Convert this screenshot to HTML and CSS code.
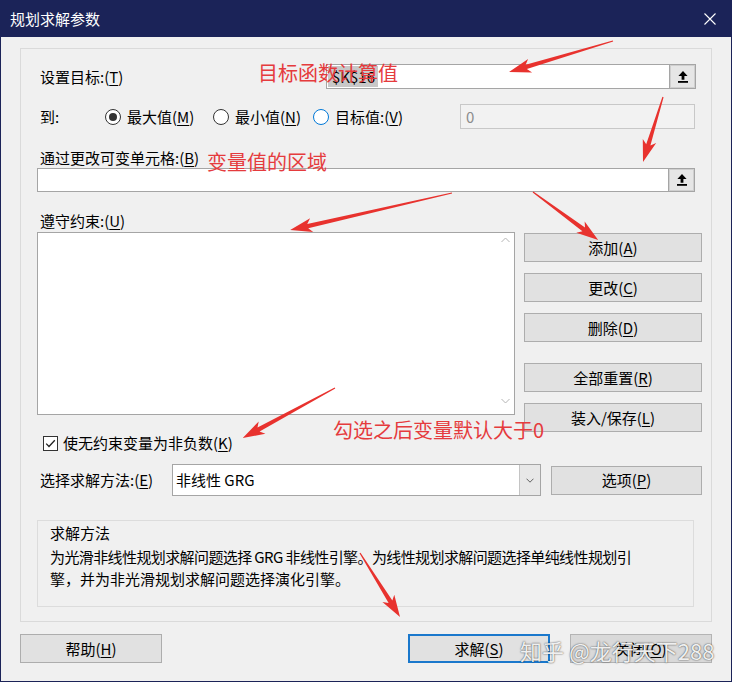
FILE: index.html
```html
<!DOCTYPE html>
<html lang="zh-CN">
<head>
<meta charset="utf-8">
<title>规划求解参数</title>
<link rel="stylesheet" href="styles.css">
</head>
<body>
<div class="window">
  <div class="titlebar">
    <span class="title">规划求解参数</span>
    <svg class="close" width="12" height="12" viewBox="0 0 12 12"><path d="M0.5 0.5L11.5 11.5M11.5 0.5L0.5 11.5" stroke="#ffffff" stroke-width="1.1" fill="none"/></svg>
  </div>
  <div class="body">
    <div class="panel">
      <div class="row">
        <span class="label">设置目标:(<u>T</u>)</span>
        <div class="refbox ref-target">
          <div class="field"><span class="sel">$K$16</span></div>
          <div class="collapse">
            <svg width="10" height="12" viewBox="0 0 10 12"><polygon points="5,0 9.6,5 6.4,5 6.4,8.8 3.6,8.8 3.6,5 0.4,5" fill="#000"/><rect x="0" y="10" width="10" height="1.8" fill="#000"/></svg>
          </div>
        </div>
      </div>
      <div class="row row-to">
        <span class="label to-label">到:</span>
        <span class="radio radio-max"><span class="circle on"></span><span>最大值(<u>M</u>)</span></span>
        <span class="radio radio-min"><span class="circle"></span><span>最小值(<u>N</u>)</span></span>
        <span class="radio"><span class="circle focus"></span><span>目标值:(<u>V</u>)</span></span>
        <div class="valuebox">0</div>
      </div>
      <div class="label label-vars">通过更改可变单元格:(<u>B</u>)</div>
      <div class="refbox ref-vars">
        <div class="field"></div>
        <div class="collapse">
          <svg width="10" height="12" viewBox="0 0 10 12"><polygon points="5,0 9.6,5 6.4,5 6.4,8.8 3.6,8.8 3.6,5 0.4,5" fill="#000"/><rect x="0" y="10" width="10" height="1.8" fill="#000"/></svg>
        </div>
      </div>
      <div class="label label-cons">遵守约束:(<u>U</u>)</div>
      <div class="cons">
        <div class="listbox">
          <div class="scroll">
            <svg width="9" height="6" viewBox="0 0 9 6"><path d="M0.5 5L4.5 1L8.5 5" stroke="#b4b4b4" stroke-width="1" fill="none"/></svg>
            <svg width="9" height="6" viewBox="0 0 9 6"><path d="M0.5 1L4.5 5L8.5 1" stroke="#b4b4b4" stroke-width="1" fill="none"/></svg>
          </div>
        </div>
        <div class="btncol">
          <div class="btn">添加(<u>A</u>)</div>
          <div class="btn">更改(<u>C</u>)</div>
          <div class="btn">删除(<u>D</u>)</div>
          <div class="btn btn-reset">全部重置(<u>R</u>)</div>
          <div class="btn">装入/保存(<u>L</u>)</div>
        </div>
      </div>
      <div class="check-row">
        <span class="checkbox"><svg width="13" height="13" viewBox="0 0 13 13"><path d="M2.2 6.6L5 9.5L10.8 3.2" stroke="#222" stroke-width="1.3" fill="none"/></svg></span>
        <span>使无约束变量为非负数(<u>K</u>)</span>
      </div>
      <div class="method-row">
        <span class="label method-label">选择求解方法:(<u>E</u>)</span>
        <div class="select">
          <span class="select-text">非线性 GRG</span>
          <span class="select-btn"><svg width="8" height="5" viewBox="0 0 8 5"><path d="M0.5 0.7L4 4.2L7.5 0.7" stroke="#606060" stroke-width="1" fill="none"/></svg></span>
        </div>
        <div class="btn btn-opt">选项(<u>P</u>)</div>
      </div>
      <div class="group">
        <div class="group-title">求解方法</div>
        <div class="group-text"><span class="tight">为光滑非线性规划求解问题选择 GRG 非线性引擎。为线性规划求解问题选择单纯线性规划引</span><br>擎，并为非光滑规划求解问题选择演化引擎。</div>
      </div>
    </div>
    <div class="footer">
      <div class="btn btn-foot">帮助(<u>H</u>)</div>
      <div class="btn btn-foot btn-solve">求解(<u>S</u>)</div>
      <div class="btn btn-foot btn-close">关闭(<u>O</u>)</div>
    </div>
  </div>
</div>
<div class="overlay">
  <svg class="arrows" width="732" height="682" viewBox="0 0 732 682">
    <g fill="#e8322e">
      <polygon transform="translate(613,41) rotate(163.4)" points="0,-0.6 90.5,-2.2 86.5,-7 108.5,0 86.5,7 90.5,2.2 0,0.6"/>
      <polygon transform="translate(663,97) rotate(107.1)" points="0,-0.6 50,-2.2 46,-7 68,0 46,7 50,2.2 0,0.6"/>
      <polygon transform="translate(452,193) rotate(167.1)" points="0,-0.6 148,-2.2 144,-7 166,0 144,7 148,2.2 0,0.6"/>
      <polygon transform="translate(533,192) rotate(36.4)" points="0,-0.6 63,-2.2 59,-7 81,0 59,7 63,2.2 0,0.6"/>
      <polygon transform="translate(335,388) rotate(151.5)" points="0,-0.6 87,-2.2 83,-7 105,0 83,7 87,2.2 0,0.6"/>
      <polygon transform="translate(360,553) rotate(58)" points="0,-0.6 57.5,-2.2 53.5,-7 75.5,0 53.5,7 57.5,2.2 0,0.6"/>
    </g>
  </svg>
  <span class="note note-target">目标函数计算值</span>
  <span class="note note-vars">变量值的区域</span>
  <span class="note note-check">勾选之后变量默认大于0</span>
  <span class="watermark">知乎 @龙行天下288</span>
</div>
</body>
</html>
```

FILE: styles.css
```css
* { box-sizing: border-box; }
html, body { margin: 0; padding: 0; }
body {
  position: relative;
  width: 732px;
  height: 682px;
  overflow: hidden;
  background: #f0f0f0;
  font-family: "Noto Sans CJK SC", "Microsoft YaHei", sans-serif;
  font-size: 15px;
  color: #000;
}
u { text-underline-offset: 2px; text-decoration-thickness: 1px; }

.window {
  width: 732px;
  height: 682px;
  display: flex;
  flex-direction: column;
  background: #f0f0f0;
  border: 1px solid #1b2358;
  border-top: none;
}
.titlebar {
  height: 37px;
  margin: 0 -1px;
  background: #1b2358;
  display: flex;
  align-items: center;
  justify-content: space-between;
  padding: 0 16px 0 10px;
}
.title { color: #fff; font-size: 15px; line-height: 20px; }
.close { display: block; }

.body { display: flex; flex-direction: column; }
.panel {
  margin: 11px 0 0 19px;
  width: 692px;
  border: 1px solid #dadada;
  padding: 15px 8px 14px 16px;
  display: flex;
  flex-direction: column;
}
.row { display: flex; align-items: center; height: 25px; }
.row-to { margin-top: 15px; }
.label { padding-left: 3px; line-height: 20px; white-space: nowrap; }

.refbox { display: flex; height: 25px; }
.ref-target { margin-left: auto; width: 370px; margin-right: 7px; }
.ref-vars { width: 658px; height: 24px; }
.field {
  flex: 1;
  background: #fff;
  border: 1px solid #a5a5a5;
  border-right: none;
  display: flex;
  align-items: center;
}
.sel {
  background: #c8c8c8;
  height: 21px;
  line-height: 21px;
  padding: 0 3px 0 4px;
  margin-left: 1px;
}
.collapse {
  width: 27px;
  background: #e6e6e6;
  border: 1px solid #a5a5a5;
  box-shadow: inset 0 0 0 1px #cfcfcf;
  display: flex;
  align-items: center;
  justify-content: center;
}
.collapse svg { display: block; }

.to-label { width: 68px; }
.radio { display: flex; align-items: center; gap: 6px; white-space: nowrap; line-height: 20px; }
.radio-max { width: 108px; }
.radio-min { width: 100px; }
.circle {
  width: 16px;
  height: 16px;
  border: 1px solid #333;
  border-radius: 50%;
  background: #fff;
  display: flex;
  align-items: center;
  justify-content: center;
  flex: none;
}
.circle.on::after {
  content: "";
  width: 8px;
  height: 8px;
  border-radius: 50%;
  background: #333;
}
.circle.focus { border-color: #0078d7; }
.valuebox {
  margin-left: auto;
  margin-right: 8px;
  width: 235px;
  height: 25px;
  border: 1px solid #c8c8c8;
  background: #f2f2f2;
  color: #8c8c8c;
  padding-left: 5px;
  line-height: 23px;
}

.label-vars { margin-top: 19px; height: 20px; }
.label-cons { margin-top: 19px; height: 20px; }

.cons { display: flex; gap: 9px; margin-top: 1px; }
.listbox {
  width: 478px;
  height: 183px;
  background: #fff;
  border: 1px solid #a5a5a5;
  display: flex;
  justify-content: flex-end;
}
.scroll {
  width: 17px;
  display: flex;
  flex-direction: column;
  justify-content: space-between;
  align-items: center;
  padding: 4px 0 10px;
}
.scroll svg { display: block; }
.btncol { width: 178px; display: flex; flex-direction: column; padding-top: 1px; }
.btn {
  height: 29px;
  background: #e1e1e1;
  border: 1px solid #adadad;
  display: flex;
  align-items: center;
  justify-content: center;
  white-space: nowrap;
  line-height: 20px;
  margin-top: 11px;
}
.btncol .btn:first-child { margin-top: 0; }
.btncol .btn-reset { margin-top: 21px; }

.check-row {
  margin-top: 1px;
  height: 20px;
  display: flex;
  align-items: center;
  gap: 5px;
  padding-left: 6px;
  line-height: 20px;
}
.checkbox {
  width: 15px;
  height: 15px;
  border: 1px solid #333;
  background: #fff;
  display: flex;
  align-items: center;
  justify-content: center;
}
.checkbox svg { display: block; }

.method-row { margin-top: 11px; height: 32px; display: flex; align-items: center; }
.method-label { width: 135px; }
.select {
  width: 369px;
  height: 32px;
  background: #fff;
  border: 1px solid #a5a5a5;
  display: flex;
}
.select-text { flex: 1; padding-left: 3px; line-height: 30px; }
.select-btn {
  width: 21px;
  background: #e8e8e8;
  border-left: 1px solid #c4c4c4;
  display: flex;
  align-items: center;
  justify-content: center;
}
.select-btn svg { display: block; }
.btn-opt { width: 151px; margin: 0 0 0 10px; }

.group {
  margin-top: 24px;
  width: 657px;
  height: 87px;
  border: 1px solid #dcdcdc;
  padding: 1px 0 0 12px;
}
.group-title { line-height: 22px; }
.group-text { margin-top: 2px; line-height: 22px; white-space: nowrap; }
.tight { letter-spacing: -0.6px; }

.footer { display: flex; margin-top: 12px; padding: 0 19px; }
.btn-foot { width: 142px; margin-top: 0; }
.btn-solve { margin-left: auto; border: 2px solid #1a78cc; }
.btn-close { margin-left: 20px; background: #d9d9d9; border-color: #b4b4b4; }

.overlay {
  position: absolute;
  left: 0;
  top: 0;
  width: 732px;
  height: 682px;
  pointer-events: none;
}
.arrows { position: absolute; left: 0; top: 0; display: block; }
.note {
  position: absolute;
  color: #e53b3d;
  font-size: 20px;
  line-height: 24px;
  white-space: nowrap;
}
.note-target { left: 258px; top: 61px; }
.note-vars { left: 207px; top: 150px; }
.note-check { left: 333px; top: 418px; }
.watermark {
  position: absolute;
  left: 520px;
  top: 636px;
  font-size: 22px;
  line-height: 28px;
  color: rgba(255, 255, 255, 0.92);
  text-shadow: 0 0 2px rgba(0, 0, 0, 0.55), 0 0 1px rgba(0, 0, 0, 0.4);
  white-space: nowrap;
}
```
